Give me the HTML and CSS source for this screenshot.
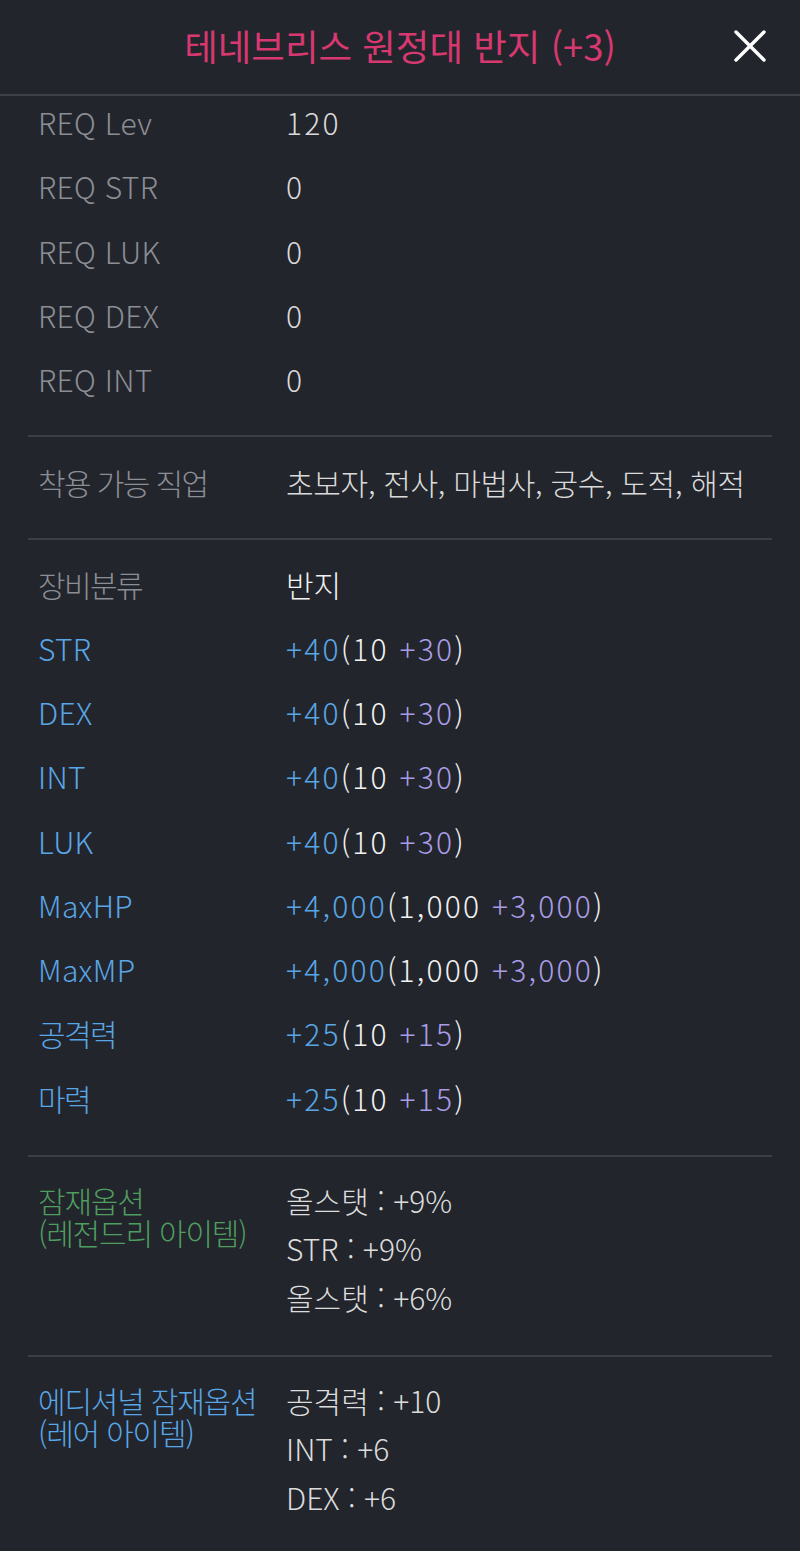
FILE: index.html
```html
<!DOCTYPE html>
<html lang="ko">
<head>
<meta charset="utf-8">
<link rel="stylesheet" href="styles.css">
</head>
<body>
<div class="page">
  <header class="head">
    <h1 class="title">테네브리스 원정대 반지 (+3)</h1>
    <svg class="close" width="34" height="34" viewBox="0 0 34 34"><path d="M3 3 L31 31 M31 3 L3 31" stroke="#ffffff" stroke-width="3.4" stroke-linecap="round" fill="none"/></svg>
  </header>

  <section class="sec s1">
    <div class="row"><div class="lab">REQ Lev</div><div class="val num">120</div></div>
    <div class="row"><div class="lab">REQ STR</div><div class="val num">0</div></div>
    <div class="row"><div class="lab">REQ LUK</div><div class="val num">0</div></div>
    <div class="row"><div class="lab">REQ DEX</div><div class="val num">0</div></div>
    <div class="row"><div class="lab">REQ INT</div><div class="val num">0</div></div>
  </section>

  <section class="sec s2">
    <div class="row"><div class="lab ko">착용 가능 직업</div><div class="val jobs">초보자, 전사, 마법사, 궁수, 도적, 해적</div></div>
  </section>

  <section class="sec s3">
    <div class="row"><div class="lab ko">장비분류</div><div class="val white">반지</div></div>
    <div class="row"><div class="lab blue">STR</div><div class="val white num"><span class="blue">+40</span>(10 <span class="purple">+30</span>)</div></div>
    <div class="row"><div class="lab blue">DEX</div><div class="val white num"><span class="blue">+40</span>(10 <span class="purple">+30</span>)</div></div>
    <div class="row"><div class="lab blue">INT</div><div class="val white num"><span class="blue">+40</span>(10 <span class="purple">+30</span>)</div></div>
    <div class="row"><div class="lab blue">LUK</div><div class="val white num"><span class="blue">+40</span>(10 <span class="purple">+30</span>)</div></div>
    <div class="row"><div class="lab blue">MaxHP</div><div class="val white num"><span class="blue">+4,000</span>(1,000 <span class="purple">+3,000</span>)</div></div>
    <div class="row"><div class="lab blue">MaxMP</div><div class="val white num"><span class="blue">+4,000</span>(1,000 <span class="purple">+3,000</span>)</div></div>
    <div class="row"><div class="lab blue ko">공격력</div><div class="val white num"><span class="blue">+25</span>(10 <span class="purple">+15</span>)</div></div>
    <div class="row"><div class="lab blue ko">마력</div><div class="val white num"><span class="blue">+25</span>(10 <span class="purple">+15</span>)</div></div>
  </section>

  <section class="sec pot">
    <div class="prow">
      <div class="plab green"><div class="pline">잠재옵션</div><div class="pline">(레전드리 아이템)</div></div>
      <div class="plist">
        <div class="pitem">올스탯 : +9%</div>
        <div class="pitem">STR : +9%</div>
        <div class="pitem">올스탯 : +6%</div>
      </div>
    </div>
  </section>

  <section class="sec pot last">
    <div class="prow">
      <div class="plab blue"><div class="pline">에디셔널 잠재옵션</div><div class="pline">(레어 아이템)</div></div>
      <div class="plist">
        <div class="pitem">공격력 : +10</div>
        <div class="pitem">INT : +6</div>
        <div class="pitem">DEX : +6</div>
      </div>
    </div>
  </section>
</div>
</body>
</html>
```

FILE: styles.css
```css
html, body {
  margin: 0;
  padding: 0;
  background: #22252c;
}
body {
  font-family: "Noto Sans CJK KR", "Noto Sans", sans-serif;
  font-weight: 300;
  color: #dcdcdc;
}
.page {
  width: 800px;
  min-height: 1551px;
  background: #22252c;
}
.head {
  height: 94px;
  border-bottom: 2px solid #3d4047;
  display: flex;
  align-items: center;
  justify-content: center;
  position: relative;
}
.title {
  margin: 0 0 4px;
  font-size: 36.5px;
  font-weight: 400;
  color: #d6386f;
  letter-spacing: 0;
}
.close {
  position: absolute;
  right: 33px;
  top: 29px;
}
.sec {
  margin: 0 28px;
  border-bottom: 2px solid #3b3e45;
}
.s1 { margin-top: -2px; padding: 0 0 20px; }
.s2 { padding: 17px 0 19px; }
.s3 { padding: 16px 0 21px; }
.row {
  display: flex;
  box-sizing: border-box;
  height: 64.25px;
  padding-bottom: 8px;
  align-items: center;
  font-size: 30px;
}
.lab {
  width: 248px;
  padding-left: 10px;
  color: #8b8e94;
  flex-shrink: 0;
  letter-spacing: 0.3px;
}
.lab.ko { letter-spacing: -1.6px; }
.val {
  color: #dadada;
  white-space: nowrap;
}
.jobs { letter-spacing: -0.3px; }
.num { letter-spacing: 2.2px; }
.white { color: #f2f2f2; }
.lab.blue, .blue { color: #59a6e6; }
.purple { color: #a99ce6; }
.pot {
  padding: 27px 0 34px;
}
.pot.last {
  border-bottom: none;
}
.prow {
  display: flex;
  font-size: 30px;
}
.plab {
  width: 248px;
  padding-left: 10px;
  flex-shrink: 0;
  letter-spacing: -1.2px;
}
.pline {
  height: 32px;
  line-height: 32px;
  white-space: nowrap;
}
.plab.green { color: #4f9d5f; }
.plist {
  display: flex;
  flex-direction: column;
  margin-top: -8.25px;
}
.pitem {
  height: 48.5px;
  line-height: 48.5px;
  color: #dcdcdc;
  white-space: nowrap;
}
```
